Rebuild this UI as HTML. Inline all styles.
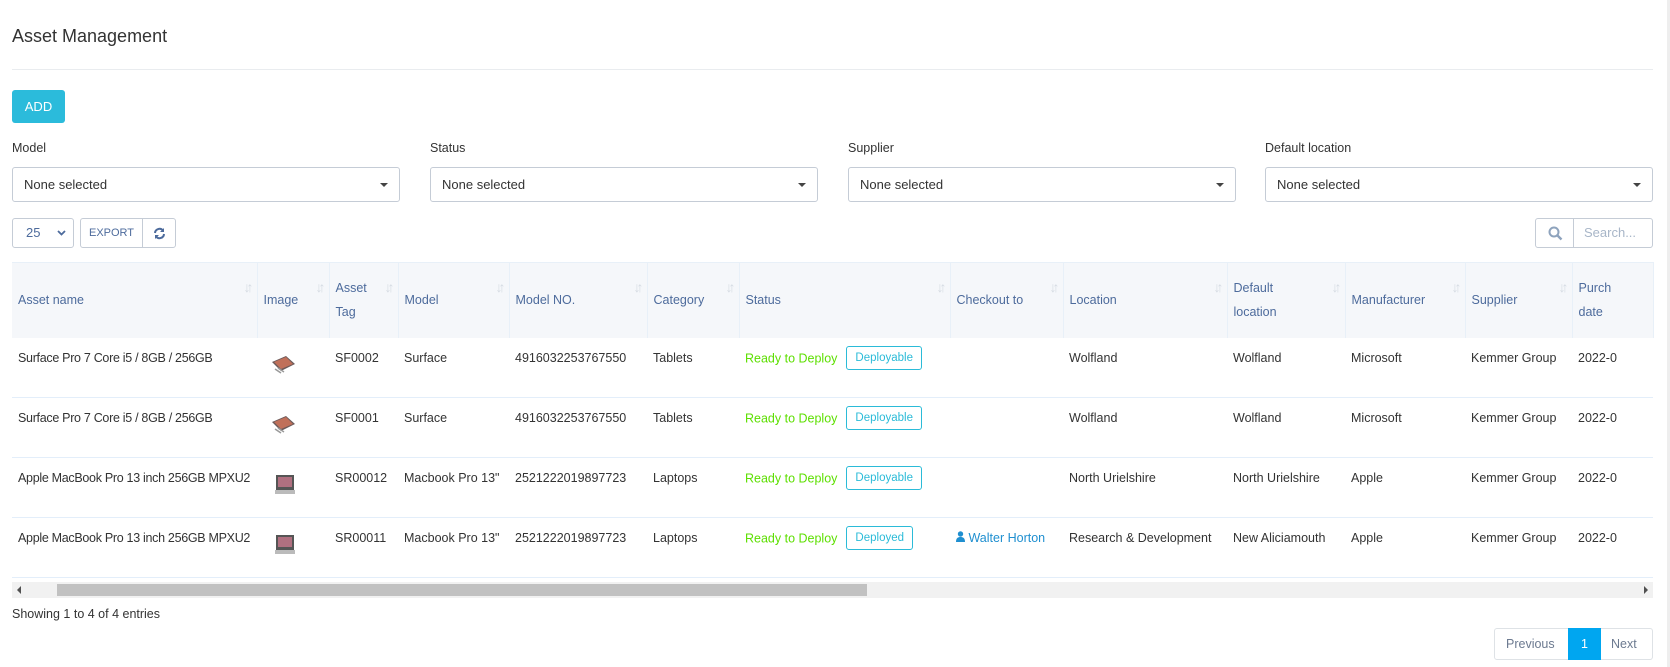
<!DOCTYPE html>
<html><head><meta charset="utf-8"><style>
*{box-sizing:border-box;margin:0;padding:0}
body{width:1670px;height:667px;overflow:hidden;background:#fff;font-family:"Liberation Sans",sans-serif;font-size:13px;color:#333;position:relative}
.a{position:absolute}
.sel{position:absolute;top:167px;height:35px;width:388px;border:1px solid #c5ccd6;border-radius:3px;padding:0 11px;line-height:33px;font-size:13px;color:#333}
.sel:after{content:"";position:absolute;right:11px;top:15px;border-left:4px solid transparent;border-right:4px solid transparent;border-top:4px solid #444}
.lbl{position:absolute;top:141px;font-size:12.5px;color:#333}
table{position:absolute;left:12px;top:262px;border-collapse:collapse;table-layout:fixed;width:1641px}
th{background:#f5f7fa;color:#4d6b9c;font-weight:normal;text-align:left;height:75px;padding:0 6px;border-right:1px solid #e8f0f8;border-top:1px solid #e8f0f8;font-size:12.5px;line-height:24px;position:relative;vertical-align:middle;white-space:nowrap;overflow:hidden}
th i{position:absolute;right:7px;top:12px;color:#d5dbe3;font-style:normal;font-size:14px;font-weight:bold;letter-spacing:-4px}
td{height:60px;padding:0 6px;vertical-align:top;padding-top:10px;border-bottom:1px solid #e3eefa;white-space:nowrap;overflow:hidden;font-size:12.5px;color:#333;line-height:20px}
td:first-child{letter-spacing:-0.3px}
.g{color:#5ddf00}
.b{display:inline-block;border:1px solid #2bbbd8;color:#2bbbd8;border-radius:3px;padding:0 8px;height:24px;line-height:22px;font-size:11.5px;margin-left:9px;vertical-align:middle;margin-top:-2px}
.img{display:inline-block;width:28px;height:22px;margin:6px 0 0 6px}
</style></head><body>
<div class="a" style="left:12px;top:26px;font-size:18px;color:#333">Asset Management</div>
<div class="a" style="left:12px;top:69px;width:1641px;height:1px;background:#e9ecef"></div>
<div class="a" style="right:0;top:0;width:3px;height:667px;background:#eee"></div>
<div class="a" style="left:12px;top:90px;width:53px;height:33px;background:#2bbbdb;border-radius:3px;color:#fff;font-size:13px;line-height:33px;text-align:center">ADD</div>
<div class="lbl" style="left:12px">Model</div><div class="sel" style="left:12px">None selected</div>
<div class="lbl" style="left:430px">Status</div><div class="sel" style="left:430px">None selected</div>
<div class="lbl" style="left:848px">Supplier</div><div class="sel" style="left:848px">None selected</div>
<div class="lbl" style="left:1265px">Default location</div><div class="sel" style="left:1265px">None selected</div>
<div class="a" style="left:12px;top:218px;width:62px;height:30px;border:1px solid #c5ccd6;border-radius:3px;color:#4d6b9c;font-size:13px;line-height:28px;padding-left:13px">25<svg style="position:absolute;right:7px;top:11px" width="9" height="6"><path d="M1 1l3.5 3.5L8 1" stroke="#4d6b9c" stroke-width="1.8" fill="none"/></svg></div>
<div class="a" style="left:80px;top:218px;width:96px;height:30px;border:1px solid #c5ccd6;border-radius:3px"><div class="a" style="left:0;width:62px;height:28px;border-right:1px solid #c5ccd6;color:#4d6b9c;font-size:11px;line-height:28px;text-align:center">EXPORT</div><svg class="a" style="left:72px;top:8px" width="13" height="13" viewBox="0 0 13 13"><path d="M2 6a4.5 4.5 0 0 1 8-2.5M11 7a4.5 4.5 0 0 1-8 2.5" stroke="#4d6b9c" stroke-width="2" fill="none"/><path d="M11 1v4H7zM2 12V8h4z" fill="#4d6b9c"/></svg></div>
<div class="a" style="left:1535px;top:218px;width:118px;height:30px;border:1px solid #c5ccd6;border-radius:3px"><div class="a" style="left:0;width:38px;height:28px;border-right:1px solid #c5ccd6"><svg style="position:absolute;left:12px;top:7px" width="15" height="15"><circle cx="6" cy="6" r="4.5" stroke="#8ea3bd" stroke-width="2" fill="none"/><path d="M9.5 9.5l4 4" stroke="#8ea3bd" stroke-width="2.4"/></svg></div><div class="a" style="left:48px;top:0;line-height:28px;color:#a8b6c8;font-size:13px">Search...</div></div>
<table>
<colgroup><col style="width:245px"><col style="width:72px"><col style="width:69px"><col style="width:111px"><col style="width:138px"><col style="width:92px"><col style="width:211px"><col style="width:113px"><col style="width:164px"><col style="width:118px"><col style="width:120px"><col style="width:107px"><col style="width:81px"></colgroup>
<tr><th>Asset name<i>↓↑</i></th><th>Image<i>↓↑</i></th><th>Asset<br>Tag<i>↓↑</i></th><th>Model<i>↓↑</i></th><th>Model NO.<i>↓↑</i></th><th>Category<i>↓↑</i></th><th>Status<i>↓↑</i></th><th>Checkout to<i>↓↑</i></th><th>Location<i>↓↑</i></th><th>Default<br>location<i>↓↑</i></th><th>Manufacturer<i>↓↑</i></th><th>Supplier<i>↓↑</i></th><th>Purch<br>date</th></tr>
<tr><td>Surface Pro 7 Core i5 / 8GB / 256GB</td><td><svg class="img" viewBox="0 0 28 22"><path d="M3 8l14-6 9 8-14 7z" fill="#6b5a5a"/><path d="M5 8l12-5 7 7-12 5z" fill="#c0705a"/><path d="M6 15l6 4M9 14l6 4" stroke="#999" stroke-width="1.5"/></svg></td><td>SF0002</td><td>Surface</td><td>4916032253767550</td><td>Tablets</td><td><span class="g">Ready to Deploy</span><span class="b">Deployable</span></td><td></td><td>Wolfland</td><td>Wolfland</td><td>Microsoft</td><td>Kemmer Group</td><td>2022-0</td></tr>
<tr><td>Surface Pro 7 Core i5 / 8GB / 256GB</td><td><svg class="img" viewBox="0 0 28 22"><path d="M3 8l14-6 9 8-14 7z" fill="#6b5a5a"/><path d="M5 8l12-5 7 7-12 5z" fill="#c0705a"/><path d="M6 15l6 4M9 14l6 4" stroke="#999" stroke-width="1.5"/></svg></td><td>SF0001</td><td>Surface</td><td>4916032253767550</td><td>Tablets</td><td><span class="g">Ready to Deploy</span><span class="b">Deployable</span></td><td></td><td>Wolfland</td><td>Wolfland</td><td>Microsoft</td><td>Kemmer Group</td><td>2022-0</td></tr>
<tr><td>Apple MacBook Pro 13 inch 256GB MPXU2</td><td><svg class="img" viewBox="0 0 28 22"><rect x="7" y="1" width="18" height="15" fill="#555"/><rect x="9" y="3" width="14" height="10" fill="#b07080"/><rect x="6" y="16" width="20" height="4" fill="#bbb"/></svg></td><td>SR00012</td><td>Macbook Pro 13"</td><td>2521222019897723</td><td>Laptops</td><td><span class="g">Ready to Deploy</span><span class="b">Deployable</span></td><td></td><td>North Urielshire</td><td>North Urielshire</td><td>Apple</td><td>Kemmer Group</td><td>2022-0</td></tr>
<tr><td>Apple MacBook Pro 13 inch 256GB MPXU2</td><td><svg class="img" viewBox="0 0 28 22"><rect x="7" y="1" width="18" height="15" fill="#555"/><rect x="9" y="3" width="14" height="10" fill="#b07080"/><rect x="6" y="16" width="20" height="4" fill="#bbb"/></svg></td><td>SR00011</td><td>Macbook Pro 13"</td><td>2521222019897723</td><td>Laptops</td><td><span class="g">Ready to Deploy</span><span class="b">Deployed</span></td><td style="color:#1f8fd0"><svg width="9" height="11" viewBox="0 0 9 11"><circle cx="4.5" cy="3" r="2.7" fill="#1f8fd0"/><path d="M0 11c0-4 2-5 4.5-5S9 7 9 11z" fill="#1f8fd0"/></svg> Walter Horton</td><td>Research &amp; Development</td><td>New Aliciamouth</td><td>Apple</td><td>Kemmer Group</td><td>2022-0</td></tr>
</table>
<div class="a" style="left:12px;top:582px;width:1641px;height:16px;background:#f1f1f1"><div class="a" style="left:45px;top:2px;width:810px;height:12px;background:#c1c1c1"></div><div class="a" style="left:5px;top:4px;border-top:4px solid transparent;border-bottom:4px solid transparent;border-right:4px solid #505050"></div><div class="a" style="right:5px;top:4px;border-top:4px solid transparent;border-bottom:4px solid transparent;border-left:4px solid #505050"></div></div>
<div class="a" style="left:12px;top:607px;font-size:12.5px;color:#333">Showing 1 to 4 of 4 entries</div>
<div class="a" style="left:1494px;top:628px;width:159px;height:32px;border:1px solid #dee2e6;border-radius:3px;font-size:12.5px;color:#6c7a90;line-height:30px">
<span class="a" style="left:11px">Previous</span><span class="a" style="left:73px;top:-1px;width:33px;height:32px;background:#00a6f0;color:#fff;text-align:center;line-height:32px">1</span><span class="a" style="left:116px">Next</span></div>
</body></html>
